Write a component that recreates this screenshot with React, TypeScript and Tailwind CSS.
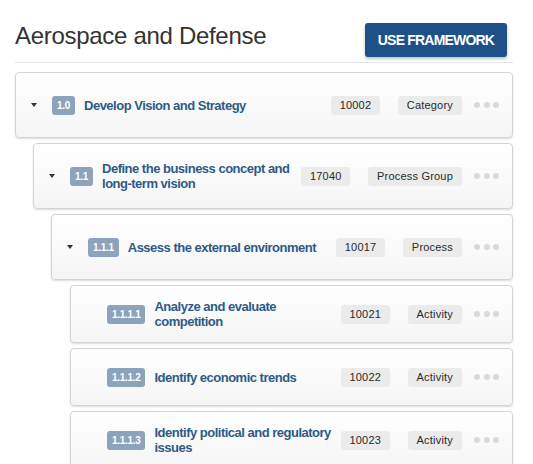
import React from "react";

type Row = {
  level: number;
  code: string;
  title: React.ReactNode;
  num: string;
  type: string;
  caret: boolean;
};

const rows: Row[] = [
  { level: 0, code: "1.0", title: "Develop Vision and Strategy", num: "10002", type: "Category", caret: true },
  { level: 1, code: "1.1", title: "Define the business concept and long-term vision", num: "17040", type: "Process Group", caret: true },
  { level: 2, code: "1.1.1", title: "Assess the external environment", num: "10017", type: "Process", caret: true },
  { level: 3, code: "1.1.1.1", title: "Analyze and evaluate competition", num: "10021", type: "Activity", caret: false },
  { level: 3, code: "1.1.1.2", title: "Identify economic trends", num: "10022", type: "Activity", caret: false },
  { level: 3, code: "1.1.1.3", title: "Identify political and regulatory issues", num: "10023", type: "Activity", caret: false },
];

const indent = ["ml-0", "ml-[18px]", "ml-[36px]", "ml-[55px]"];

function Card({ r }: { r: Row }) {
  return (
    <div
      className={`${indent[r.level]} ${r.caret ? "h-[66px]" : "h-[58px]"} flex items-center rounded-[4px] border border-[#d4d4d4] bg-gradient-to-b from-white to-[#f5f5f5] shadow-[0_1px_2px_rgba(0,0,0,0.14)] pl-[14px] pr-[13px]`}
    >
      <div className="w-[7px] flex justify-center">
        {r.caret && (
          <div className="w-0 h-0 border-l-[3.5px] border-r-[3.5px] border-t-[4px] border-l-transparent border-r-transparent border-t-[#333]" />
        )}
      </div>
      <div className="ml-[15px] h-[19px] px-[5px] rounded-[3px] bg-[#8ca3bb] text-white text-[10px] font-bold leading-[19px] tracking-[-0.3px] shrink-0">
        {r.code}
      </div>
      <div className="ml-[9px] flex-1 pr-[8px] text-[13px] font-bold leading-[15px] tracking-[-0.5px] text-[#2c5a88]">
        {r.title}
      </div>
      <div className="h-[19px] px-[8.5px] rounded-[3px] bg-[#ebebeb] text-[11px] leading-[19px] tracking-[0.2px] text-[#2a2a2a] shrink-0">
        {r.num}
      </div>
      <div className="ml-[18px] h-[19px] px-[9px] rounded-[3px] bg-[#ebebeb] text-[11px] leading-[19px] tracking-[0.2px] text-[#2a2a2a] shrink-0">
        {r.type}
      </div>
      <div className="ml-[12px] flex gap-[3.5px] shrink-0">
        <span className="w-[6px] h-[6px] rounded-full bg-[#d9d9d9]" />
        <span className="w-[6px] h-[6px] rounded-full bg-[#d9d9d9]" />
        <span className="w-[6px] h-[6px] rounded-full bg-[#d9d9d9]" />
      </div>
    </div>
  );
}

export default function App() {
  return (
    <div
      className="w-[533px] h-[464px] overflow-hidden bg-white"
      style={{ fontFamily: '"Liberation Sans", Arial, sans-serif' }}
    >
      <div className="ml-[15px] w-[498px]">
        <div className="pt-[23px] flex justify-between items-start">
          <h1 className="-mt-[1px] text-[24px] leading-[28px] tracking-[-0.3px] text-[#333] font-normal">
            Aerospace and Defense
          </h1>
          <button className="mr-[6px] w-[142px] h-[34px] rounded-[3px] bg-[#1e5189] text-white text-[14px] font-bold tracking-[-0.8px] shadow-[0_2px_3px_rgba(0,0,0,0.25)]">
            USE FRAMEWORK
          </button>
        </div>
        <div className="mt-[5px] border-t border-[#e6e6e6]" />
        <div className="mt-[9px] flex flex-col gap-[5px]">
          {rows.map((r) => (
            <Card key={r.code} r={r} />
          ))}
        </div>
      </div>
    </div>
  );
}
